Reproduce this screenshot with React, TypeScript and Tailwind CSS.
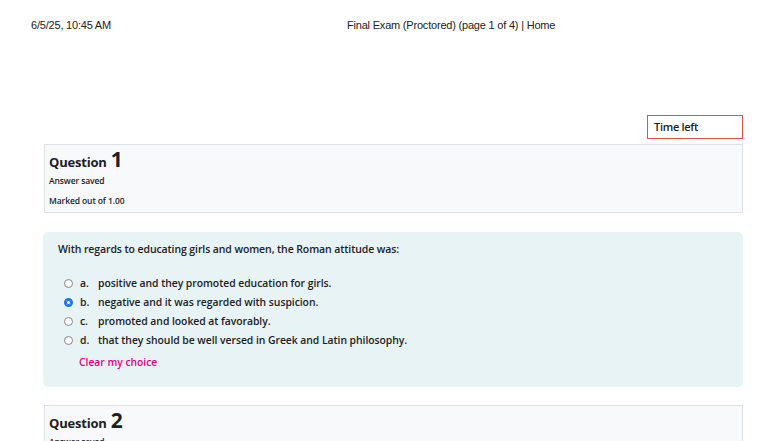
const options = [
  { key: "a.", text: "positive and they promoted education for girls.", checked: false },
  { key: "b.", text: "negative and it was regarded with suspicion.", checked: true },
  { key: "c.", text: "promoted and looked at favorably.", checked: false },
  { key: "d.", text: "that they should be well versed in Greek and Latin philosophy.", checked: false },
];

function Radio({ checked }: { checked: boolean }) {
  return (
    <span
      className={
        checked
          ? "w-[9px] h-[9px] rounded-full border-[2.5px] border-[#1a73e8] bg-white shrink-0 shadow-[inset_0_0_0_1px_#1a73e8]"
          : "w-[9px] h-[9px] rounded-full border border-[#8a8a8a] bg-white shrink-0"
      }
    />
  );
}

export default function App() {
  return (
    <div className="w-[784px] h-[441px] overflow-hidden bg-white relative">
      <div className="flex items-center h-[50px] pl-[31px] font-['Liberation_Sans',Arial,sans-serif] text-[11px] text-[#222] tracking-[-0.2px]">
        <span className="w-[316px]">6/5/25, 10:45 AM</span>
        <span>Final Exam (Proctored) (page 1 of 4) | Home</span>
      </div>

      <div className="px-[41px] pt-[65px] font-['Open_Sans',sans-serif] text-[#1d2125]">
        <div className="flex justify-end">
          <div className="w-[96px] h-[24px] border border-[#d9534f] flex items-center pl-[6px] text-[11px] font-semibold tracking-[-0.3px]">
            Time left
          </div>
        </div>

        <div className="mt-[5px] ml-[3px] h-[69px] bg-[#f8f9fa] border border-[#dee2e6] px-[4px] pt-[4px]">
          <div className="flex items-baseline gap-[4px] font-bold leading-none">
            <span className="text-[13px] tracking-[-0.2px]">Question</span>
            <span className="text-[21px]">1</span>
          </div>
          <div className="text-[8.5px] font-semibold tracking-[-0.1px] mt-[5px]">Answer saved</div>
          <div className="text-[8.5px] font-semibold tracking-[-0.1px] mt-[7px]">Marked out of 1.00</div>
        </div>

        <div className="mt-[19px] ml-[2px] h-[155px] bg-[#e7f3f5] rounded-[5px] pl-[15px] pt-[10px] font-semibold">
          <div className="text-[10.5px] tracking-[-0.1px]">With regards to educating girls and women, the Roman attitude was:</div>
          <div className="mt-[18px] flex flex-col gap-[3px] text-[10.4px] tracking-[-0.05px]">
            {options.map((o) => (
              <div key={o.key} className="flex items-center h-[16px] pl-[6px]">
                <Radio checked={o.checked} />
                <span className="ml-[7px] w-[18px]">{o.key}</span>
                <span>{o.text}</span>
              </div>
            ))}
          </div>
          <div className="mt-[6px] pl-[21px] text-[10.3px] text-[#e6007e]">Clear my choice</div>
        </div>

        <div className="mt-[18px] ml-[3px] h-[60px] bg-[#f8f9fa] border border-[#dee2e6] px-[4px] pt-[4px]">
          <div className="flex items-baseline gap-[4px] font-bold leading-none">
            <span className="text-[13px] tracking-[-0.2px]">Question</span>
            <span className="text-[21px]">2</span>
          </div>
          <div className="text-[8.5px] font-semibold tracking-[-0.1px] mt-[5px]">Answer saved</div>
        </div>
      </div>
    </div>
  );
}
